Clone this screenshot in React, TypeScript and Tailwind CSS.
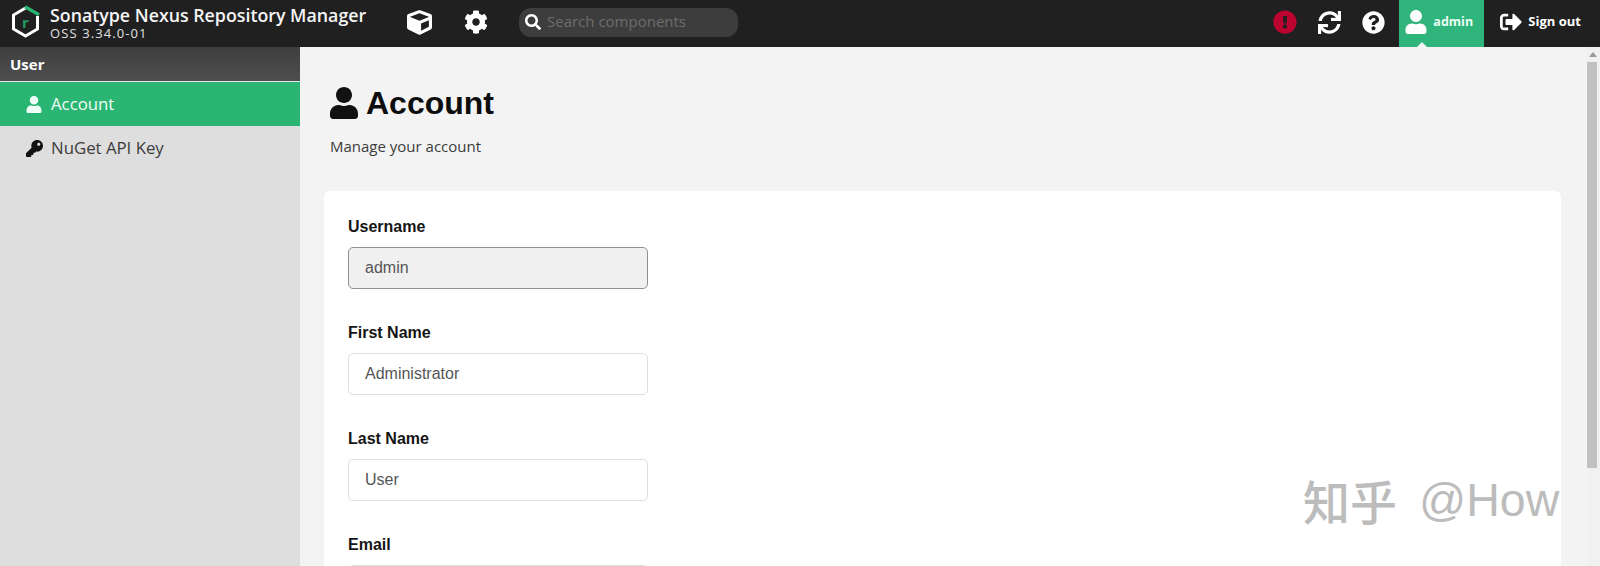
import { FaCog, FaCube, FaExclamationCircle, FaKey, FaQuestionCircle, FaSearch, FaSignOutAlt, FaSync, FaUser } from "react-icons/fa";

const ui = "font-['Open_Sans',sans-serif]";

function Logo() {
  return (
    <svg width="30" height="34" viewBox="0 0 30 34" className="shrink-0">
      <path d="M14.5 3 L2.5 10 V24 L14.5 31 L26.5 24 V11" fill="none" stroke="#fff" strokeWidth="3" />
      <path d="M14 1.8 L28 9.8" fill="none" stroke="#2bb573" strokeWidth="3.4" />
      <text x="14.5" y="23" textAnchor="middle" fontSize="15" fontWeight="700" fill="#1f9a68" fontFamily="Open Sans, sans-serif">r</text>
    </svg>
  );
}

function Field({ label, value, disabled }: { label: string; value?: string; disabled?: boolean }) {
  return (
    <div className="mb-[33px]">
      <div className="mb-[10px] h-[21px] font-['Liberation_Sans',sans-serif] text-[16px] leading-[21px] font-bold text-[#151515]">{label}</div>
      <div
        className={`flex h-[42px] w-[300px] items-center rounded-[5px] border px-4 font-['Liberation_Sans',sans-serif] text-[16px] text-[#555] ${
          disabled ? "border-[#8f8f8f] bg-[#f0f0f0]" : "border-[#dddddd] bg-white"
        }`}
      >
        {value}
      </div>
    </div>
  );
}

export default function App() {
  return (
    <div className={`flex h-[566px] w-[1600px] flex-col overflow-hidden bg-[#f3f3f3] ${ui}`}>
      <header className="flex h-[47px] shrink-0 items-center bg-[#202020] text-white">
        <div className="mb-[3px] ml-[11px] flex items-center gap-[9px]">
          <Logo />
          <div className="w-[357px]">
            <div className="text-[17.8px] leading-[21px] font-semibold whitespace-nowrap text-[#f5f5f5]">Sonatype Nexus Repository Manager</div>
            <div className="text-[13px] leading-[14px] tracking-[1.1px] text-[#e0e0e0]">OSS 3.34.0-01</div>
          </div>
        </div>
        <FaCube className="mb-[3px] h-[25px] w-[25px]" />
        <FaCog className="mb-[3px] ml-[32px] h-[24px] w-[24px]" />
        <div className="mb-[3px] ml-[31px] flex h-[29px] w-[219px] items-center rounded-[12px] bg-[#3d3d3d] pl-[6px]">
          <FaSearch className="h-[16px] w-[16px]" />
          <span className="ml-[6px] pb-[1px] text-[15px] text-[#6d6d6d]">Search components</span>
        </div>
        <div className="ml-auto flex h-full items-center">
          <FaExclamationCircle className="mb-[3px] h-[24px] w-[24px] text-[#bc0430]" />
          <FaSync className="mb-[3px] ml-[21px] h-[23px] w-[23px]" />
          <FaQuestionCircle className="mb-[3px] ml-[21px] h-[23px] w-[23px]" />
          <div className="relative ml-[14px] flex h-full w-[85px] items-center bg-[#2fb47c] pb-[3px] pl-[6px]">
            <FaUser className="h-[24px] w-[22px]" />
            <span className="ml-[6px] text-[12.5px] font-bold text-[#eafff5]">admin</span>
            <span className="absolute bottom-0 left-[18px] h-0 w-0 border-x-[5px] border-b-[5px] border-x-transparent border-b-[#f3f3f3]" />
          </div>
          <FaSignOutAlt className="mb-[3px] ml-[16px] h-[22px] w-[22px]" />
          <span className="mr-[19px] mb-[3px] ml-[6px] text-[13px] font-bold">Sign out</span>
        </div>
      </header>
      <div className="flex min-h-0 flex-1">
        <aside className="w-[300px] shrink-0 bg-[#dedede]">
          <div className="flex h-[34px] items-center bg-gradient-to-b from-[#3f3f3f] to-[#4e4e4e] pl-[10px] text-[15px] font-bold text-white">User</div>
          <div className="h-px bg-[#e8e8e8]" />
          <div className="flex h-[44px] items-center bg-[#2bb573] pl-[26px] text-[16.8px] text-[#f0fff8]">
            <FaUser className="h-[17px] w-[16px]" />
            <span className="ml-[9px]">Account</span>
          </div>
          <div className="flex h-[44px] items-center pl-[26px] text-[16.8px] text-[#3c3c3c]">
            <FaKey className="h-[17px] w-[17px] text-[#111]" />
            <span className="ml-[8px]">NuGet API Key</span>
          </div>
        </aside>
        <main className="relative min-w-0 flex-1 overflow-hidden pt-[37px] pl-[24px]">
          <div className="flex items-center pl-[6px]">
            <FaUser className="h-[32px] w-[28px] text-[#111]" />
            <h1 className="ml-[8px] font-['Liberation_Sans',sans-serif] text-[32px] leading-[38px] font-bold text-[#0d0d0d]">Account</h1>
          </div>
          <p className="mt-[14px] pl-[6px] text-[15px] leading-[20px] text-[#3c3c3c]">Manage your account</p>
          <section className="mt-[35px] w-[1237px] rounded-t-[6px] bg-white px-[24px] pt-[25px]">
            <Field label="Username" value="admin" disabled />
            <Field label="First Name" value="Administrator" />
            <Field label="Last Name" value="User" />
            <Field label="Email" />
          </section>
          <div className="absolute top-[428px] left-[1003px] flex items-center gap-[22px] text-[#bcbcbc] [text-shadow:2px_-2px_0_#fff]">
            <span className="font-['Noto_Sans_CJK_SC',sans-serif] text-[47px] leading-[50px] font-medium">知乎</span>
            <span className="font-['Liberation_Sans',sans-serif] text-[46.5px] leading-[50px]">@How</span>
          </div>
        </main>
        <div className="relative w-[13px] shrink-0 bg-[#f1f1f1]">
          <span className="absolute top-[5px] left-[2px] h-0 w-0 border-x-[4px] border-b-[5px] border-x-transparent border-b-[#9a9a9a]" />
          <div className="mt-[15px] h-[406px] w-[10px] bg-[#c1c1c1]" />
        </div>
      </div>
    </div>
  );
}
